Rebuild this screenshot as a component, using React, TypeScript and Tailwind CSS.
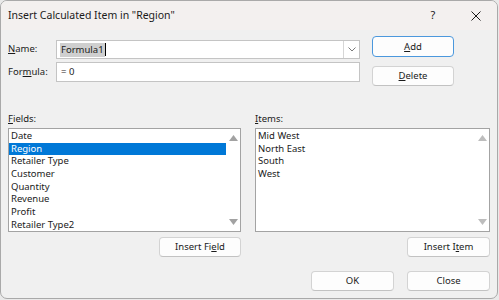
import React from 'react';

const fields = ['Date', 'Region', 'Retailer Type', 'Customer', 'Quantity', 'Revenue', 'Profit', 'Retailer Type2'];
const items = ['Mid West', 'North East', 'South', 'West'];

const font = { fontFamily: '"Noto Sans", "Open Sans", "Liberation Sans", sans-serif' };

// Small filled triangle used by the list scrollbars
const Arrow: React.FC<{ down?: boolean; color: string }> = ({ down, color }) => (
  <svg width="9" height="6" viewBox="0 0 9 6">
    <path d={down ? 'M0 0 H9 L4.5 6 Z' : 'M0 6 H9 L4.5 0 Z'} fill={color} />
  </svg>
);

const Button: React.FC<{ children: React.ReactNode; primary?: boolean; className?: string }> = ({
  children,
  primary,
  className = ''
}) => (
  <div
    className={`flex items-center justify-center rounded-[4px] bg-[#fdfdfd] text-[9.5px] leading-none text-[#1b1b1b] border ${
      primary ? 'border-[#4b98dd]' : 'border-[#d3d3d3] border-b-[#c2c2c2]'
    } ${className}`}
  >
    {children}
  </div>
);

const ListBox: React.FC<{
  rows: string[];
  selected?: number;
  arrowColor: string;
  width: string;
}> = ({ rows, selected, arrowColor, width }) => (
  <div className={`${width} h-[104px] flex bg-white border border-[#a3a3a3] overflow-hidden`}>
    <div className="flex-1 flex flex-col pt-[1px]">
      {rows.map((r, i) => (
        <div
          key={r}
          className={`h-[12.7px] leading-[12.7px] pl-[2px] text-[9.5px] whitespace-nowrap ${
            i === selected ? 'bg-[#0078d7] text-white' : 'text-[#1b1b1b]'
          }`}
        >
          {r}
        </div>
      ))}
    </div>
    <div className="w-[14px] flex flex-col items-center justify-between pt-[6px] pb-[6px]">
      <Arrow color={arrowColor} />
      <Arrow down color={arrowColor} />
    </div>
  </div>
);

export default function App() {
  return (
    <div className="w-[499px] h-[300px] bg-[#e9e9e9]" style={font}>
      <div className="w-[498px] h-[299px] flex flex-col border border-[#a9a9a9] rounded-[7px] overflow-hidden bg-[#f0f0f0]">
        {/* Title bar */}
        <div className="h-[29px] shrink-0 flex items-center bg-[#f3f0ef] pl-[7px] text-[10.5px] text-[#1b1b1b]">
          <span className="flex-1">Insert Calculated Item in "Region"</span>
          <span className="w-[20px] text-center text-[11px] mr-[28px]">?</span>
          <svg width="10" height="10" viewBox="0 0 10 10" className="mr-[16px]">
            <path d="M0.5 0.5 L9.5 9.5 M9.5 0.5 L0.5 9.5" stroke="#1b1b1b" strokeWidth="1" />
          </svg>
        </div>

        {/* Body */}
        <div className="flex-1 flex flex-col pl-[7px] text-[9.5px] text-[#1b1b1b]">
          {/* Name / Formula */}
          <div className="h-[57px] flex items-start">
            <div className="mt-[10px] flex flex-col gap-[3px]">
              <div className="flex items-center h-[19px]">
                <span className="w-[48px]">
                  <u>N</u>ame:
                </span>
                <div className="w-[304px] h-[19px] flex bg-white border border-[#c4c4c4]">
                  <div className="flex-1 flex items-center pl-[3px]">
                    <span className="bg-[#cfcfcf] leading-[14px] px-[1px]">Formula1</span>
                    <span className="w-[1px] h-[13px] bg-black" />
                  </div>
                  <div className="w-[16px] flex items-center justify-center border-l border-[#d6d6d6]">
                    <svg width="8" height="5" viewBox="0 0 8 5">
                      <path d="M0.5 0.5 L4 4 L7.5 0.5" stroke="#7a7a7a" fill="none" strokeWidth="1" />
                    </svg>
                  </div>
                </div>
              </div>
              <div className="flex items-center h-[20px]">
                <span className="w-[48px]">
                  For<u>m</u>ula:
                </span>
                <div className="w-[304px] h-[20px] flex items-center bg-white border border-[#c4c4c4] pl-[4px]">
                  = 0
                </div>
              </div>
            </div>
            <div className="ml-[12px] mt-[6px] flex flex-col gap-[9px]">
              <Button primary className="w-[82px] h-[21px]">
                <span>
                  <u>A</u>dd
                </span>
              </Button>
              <Button className="w-[82px] h-[20px]">
                <span>
                  <u>D</u>elete
                </span>
              </Button>
            </div>
          </div>

          {/* Lists */}
          <div className="mt-[25px] flex gap-[14px]">
            <div className="w-[233px] flex flex-col">
              <span className="h-[14px] leading-[14px] mb-[2px]">
                <u>F</u>ields:
              </span>
              <ListBox rows={fields} selected={1} arrowColor="#a2a2a2" width="w-[233px]" />
              <div className="flex justify-end mt-[5px]">
                <Button className="w-[82px] h-[20px]">
                  <span>
                    Insert Fi<u>e</u>ld
                  </span>
                </Button>
              </div>
            </div>
            <div className="w-[235px] flex flex-col">
              <span className="h-[14px] leading-[14px] mb-[2px]">
                <u>I</u>tems:
              </span>
              <ListBox rows={items} arrowColor="#bdbdbd" width="w-[235px]" />
              <div className="flex justify-end mt-[5px]">
                <Button className="w-[83px] h-[20px]">
                  <span>
                    Insert I<u>t</u>em
                  </span>
                </Button>
              </div>
            </div>
          </div>

          {/* OK / Close */}
          <div className="mt-[14px] flex justify-end gap-[13px] w-[482px]">
            <Button className="w-[83px] h-[20px]">OK</Button>
            <Button className="w-[83px] h-[20px]">Close</Button>
          </div>
        </div>
      </div>
    </div>
  );
}
